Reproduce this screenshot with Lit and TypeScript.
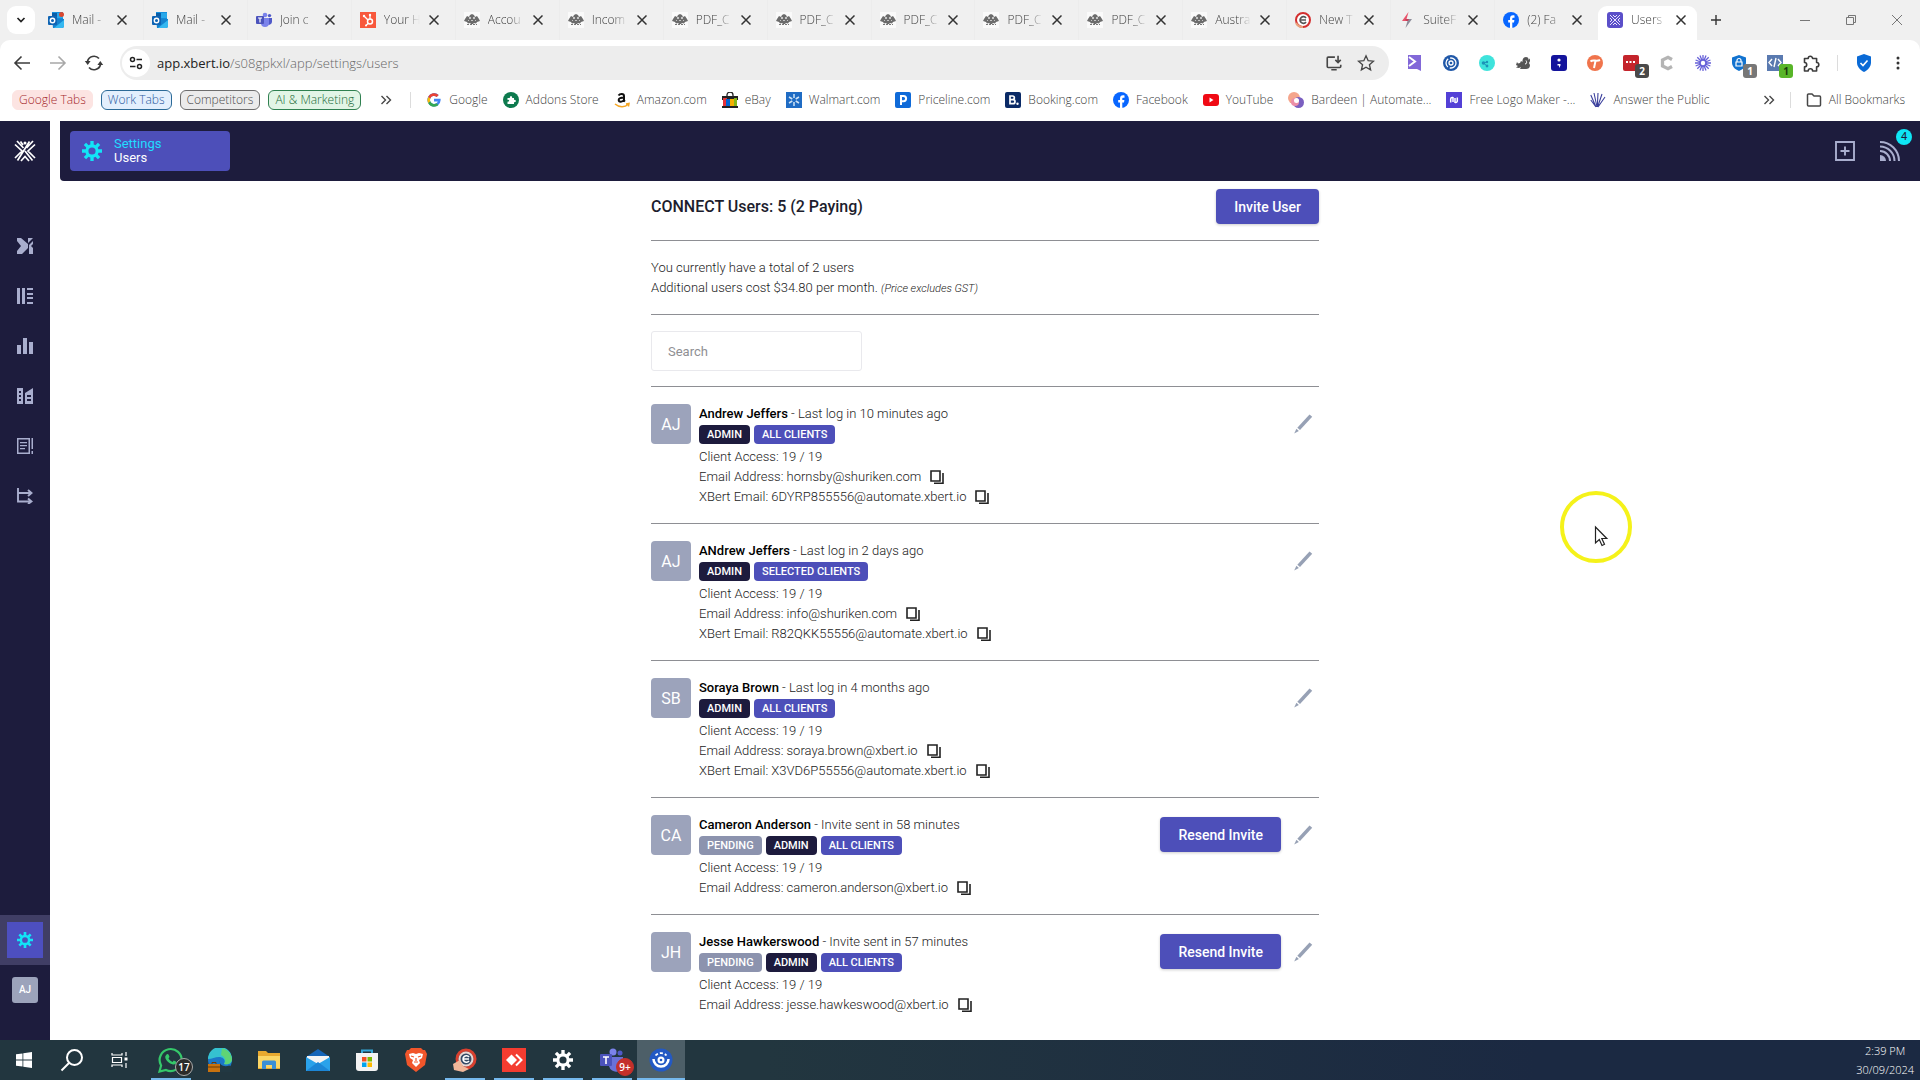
import { LitElement, html, css, nothing, TemplateResult } from "lit";
import { customElement } from "lit/decorators.js";

/* ---------- favicons ---------- */
const crest = html`<svg width="16" height="16" viewBox="0 0 16 16" aria-hidden="true"><rect width="16" height="16" fill="#fafafa"/><path d="M1 7l2-3 2 1 1-2 2-1 2 1 1 2 2-1 2 3 1 2-3 1-1 1.500-2-.5-1 1H7l-1-1-2 .5L3 10 0 9z" fill="#6c6c6c"/><path d="M5 5h2v2H5zM9 5h2v2H9zM7 8h2v1H7zM4 8h1v1H4zM11 8h1v1h-1z" fill="#c4c4c4"/><path d="M3 12.500h10" stroke="#777" stroke-width="1" stroke-dasharray="2 1"/></svg>`;
const outlook = (dot: boolean) => html`<svg width="16" height="16" viewBox="0 0 16 16" aria-hidden="true"><path d="M4 0h11v7H4z" fill="#1490df"/><path d="M4 1h5v5H4z" fill="#0a5ea8"/><path d="M9 1h6v5H9z" fill="#28a8ea"/><path d="M4 6l12 1v7a2 2 0 0 1-2 2H5z" fill="#1583cf"/><path d="M16 8v6a2 2 0 0 1-2 2H6z" fill="#35b8f1"/><rect x="0" y="4" width="9" height="9" rx="1" fill="#0f64b4"/><circle cx="4.500" cy="8.500" r="2.200" fill="none" stroke="#fff" stroke-width="1.400"/><circle cx="13.500" cy="2.500" r=${dot ? 2.5 : 0} fill="#d9472f"/></svg>`;
const teams = html`<svg width="16" height="16" viewBox="0 0 16 16" aria-hidden="true"><circle cx="9" cy="3" r="2.300" fill="#7b83eb"/><circle cx="13.500" cy="3.600" r="1.700" fill="#5059c9"/><path d="M11 6h5v4a3 3 0 0 1-5 2z" fill="#5059c9"/><path d="M5 6h8v5a4 4 0 0 1-8 0z" fill="#7b83eb"/><rect x="0" y="4" width="8" height="8" rx="1" fill="#4b53bc"/><path d="M2 6h4M4 6v4.500" stroke="#fff" stroke-width="1.200"/></svg>`;
const hubspot = html`<svg width="16" height="16" viewBox="0 0 16 16" aria-hidden="true"><rect width="16" height="16" fill="#f8583c"/><circle cx="10" cy="9.500" r="2.500" fill="none" stroke="#fff" stroke-width="1.500"/><path d="M10 7V3M8 8L4 4M8 11.500l-2 2" stroke="#fff" stroke-width="1.300"/><circle cx="4" cy="4" r="1.200" fill="#fff"/><circle cx="10" cy="3" r="1.200" fill="#fff"/><circle cx="6" cy="13.500" r="1" fill="#fff"/></svg>`;
const redE = html`<svg width="16" height="16" viewBox="0 0 16 16" aria-hidden="true"><circle cx="8" cy="8" r="7" fill="#fff" stroke="#d32f2f" stroke-width="2"/><path d="M1 11a7.500 7.500 0 0 0 7 4" stroke="#e9a27c" stroke-width="2" fill="none"/><path d="M11 6a3.300 3.300 0 1 0 0 4M6 8h5" stroke="#555" stroke-width="1.700" fill="none"/></svg>`;
const bolt = html`<svg width="16" height="16" viewBox="0 0 16 16" aria-hidden="true"><path d="M9.500 0L3 9h4z" fill="#e8536a"/><path d="M6.500 16L13 7H9z" fill="#8d8d9a"/><path d="M7 9h2l1-2H6z" fill="#c6415c"/></svg>`;
const facebook = html`<svg width="16" height="16" viewBox="0 0 16 16" aria-hidden="true"><circle cx="8" cy="8" r="8" fill="#0866ff"/><path d="M7 16v-5.500H5.200V8H7V6.600C7 4.500 8 3.300 10 3.300c.7 0 1.300.1 1.500.2v2.200h-1c-1 0-1.200.5-1.200 1.200V8h2.100l-.4 2.500H9.300V16z" fill="#fff"/></svg>`;
const xbertTile = html`<svg width="16" height="16" viewBox="0 0 16 16" aria-hidden="true"><rect width="16" height="16" rx="3" fill="#5b4fc9"/><path d="M3 3l10 10M13 3L3 13M6 3l2 2 2-2M6 13l2-2 2 2M3 6l2 2-2 2M13 6l-2 2 2 2" stroke="#e6e3fb" stroke-width="1" fill="none"/></svg>`;

/* ---------- bookmark icons ---------- */
const google = html`<svg width="16" height="16" viewBox="0 0 48 48" aria-hidden="true"><path d="M43.600 20H24v8.500h11.300C34 33 29.700 36 24 36a12 12 0 1 1 8-21l6-6A20 20 0 1 0 44 24c0-1.300-.1-2.700-.4-4z" fill="#4285f4"/><path d="M6.300 14.700l6.600 4.800A12 12 0 0 1 32 15l6-6A20 20 0 0 0 6.300 14.700z" fill="#ea4335"/><path d="M24 44c5.200 0 9.900-2 13.400-5.200l-6.200-5.200A12 12 0 0 1 12.700 28l-6.500 5A20 20 0 0 0 24 44z" fill="#34a853"/><path d="M6.300 14.700A20 20 0 0 0 6.200 33l6.500-5a12 12 0 0 1 .2-8.500z" fill="#fbbc05"/></svg>`;
const addons = html`<svg width="16" height="16" viewBox="0 0 16 16" aria-hidden="true"><circle cx="8" cy="8" r="8" fill="#0d7a4e"/><path d="M4.500 6H7a1.200 1.200 0 1 1 2 0h2v2a1.200 1.200 0 1 1 0 2v2H4.500V9.500a1 1 0 1 0 0-1.600z" fill="#fff"/></svg>`;
const amazon = html`<svg width="16" height="16" viewBox="0 0 16 16" aria-hidden="true"><path d="M4.500 3.500C6 1.500 10 1.500 10 4v4.500l1 1M10 5.500C7 5.500 4.700 6 4.700 8s3.300 2.500 5.300 0" fill="none" stroke="#111" stroke-width="2"/><path d="M1 12c4 3.500 10 3.500 13 .5M14.500 14.500l.5-3-3 .5" stroke="#f5a623" stroke-width="1.500" fill="none"/></svg>`;
const ebay = html`<svg width="16" height="16" viewBox="0 0 16 16" aria-hidden="true"><path d="M5 5V3a3 3 0 0 1 6 0v2" stroke="#222" stroke-width="1.300" fill="none"/><path d="M0 4h16v4H0z" fill="#222"/><path d="M1 6h4v8H1z" fill="#e53238"/><path d="M4 7h4v7H4z" fill="#0064d2"/><path d="M8 7h4v7H8z" fill="#f5af02"/><path d="M12 6h3v8h-3z" fill="#86b817"/><path d="M0 14h16v2H0z" fill="#222"/></svg>`;
const walmart = html`<svg width="16" height="16" viewBox="0 0 16 16" aria-hidden="true"><rect width="16" height="16" fill="#1f6cc4"/><path d="M8 2v4M8 10v4M3 5l3.300 2M9.700 9L13 11M3 11l3.300-2M9.700 7L13 5" stroke="#cfe3f5" stroke-width="1.500"/></svg>`;
const priceline = html`<svg width="16" height="16" viewBox="0 0 16 16" aria-hidden="true"><rect width="16" height="16" rx="2" fill="#0f6ad8"/><path d="M6 13V4h2.500a2.500 2.500 0 0 1 0 5.200H6" stroke="#fff" stroke-width="2" fill="none"/></svg>`;
const booking = html`<svg width="16" height="16" viewBox="0 0 16 16" aria-hidden="true"><rect width="16" height="16" rx="2" fill="#0a2a66"/><path d="M5 4h2.500a1.800 1.800 0 0 1 0 3.700H5zM5 7.700h3a2 2 0 0 1 0 4H5z" stroke="#fff" stroke-width="1.700" fill="none"/><circle cx="12.500" cy="11.700" r="1.200" fill="#fff"/></svg>`;
const youtube = html`<svg width="16" height="16" viewBox="0 0 16 16" aria-hidden="true"><rect y="2" width="16" height="12" rx="3" fill="#f00a14"/><path d="M6.500 5.500v5l4-2.500z" fill="#fff"/></svg>`;
const bardeen = html`<svg width="16" height="16" viewBox="0 0 16 16" aria-hidden="true"><circle cx="6" cy="6" r="6" fill="#f5a58c"/><circle cx="10.500" cy="10.500" r="5.500" fill="#7a5fc0"/><circle cx="7" cy="10" r="4" fill="#ec8fa8"/><circle cx="8.500" cy="8.500" r="2.500" fill="#fff"/></svg>`;
const logoMaker = html`<svg width="16" height="16" viewBox="0 0 16 16" aria-hidden="true"><rect width="16" height="16" fill="#5340d6"/><path d="M7 5.500H6.200A1.500 1.500 0 0 0 4.700 7v3.500M9 10.500h.8A1.500 1.500 0 0 0 11.300 9V5.500M7 5v5M9 6v5" stroke="#fff" stroke-width="1.500" fill="none"/></svg>`;
const answer = html`<svg width="16" height="16" viewBox="0 0 16 16" aria-hidden="true"><path d="M.8 3l5.200 12M4 1l3 14M8 1L7.300 15M15 5L8 15M12 2L7.600 15M.8 8L6 15" stroke="#3a3f9c" stroke-width="1.100" fill="none"/></svg>`;
const folder = html`<svg width="16" height="16" viewBox="0 0 16 16" aria-hidden="true"><path d="M1.500 13v-10a1 1 0 0 1 1-1H6l2 2h5.500a1 1 0 0 1 1 1v8a1 1 0 0 1-1 1h-11a1 1 0 0 1-1-1z" fill="none" stroke="#474747" stroke-width="1.500"/></svg>`;
const chevrons = html`<svg width="12" height="12" viewBox="0 0 12 12" aria-hidden="true"><path d="M1.500 2l4 4-4 4M6.500 2l4 4-4 4" fill="none" stroke="#474747" stroke-width="1.400"/></svg>`;

/* ---------- browser controls ---------- */
const line = (d: string, color = "#3c3c3c", size = 20, w = "1.6") =>
  html`<svg width=${size} height=${size} viewBox="0 0 20 20" aria-hidden="true"><path d=${d} fill="none" stroke=${color} stroke-width=${w}/></svg>`;
const back = line("M18 10H3M9.500 3.500L3 10l6.500 6.500");
const fwd = line("M2 10h15M10.500 3.500L17 10l-6.500 6.500", "#a8a8a8");
const reload = html`<svg width="20" height="20" viewBox="0 0 20 20" aria-hidden="true"><path d="M5 14.500a6.700 6.700 0 0 0 11.500-3M15 5.500a6.700 6.700 0 0 0-11.500 3" fill="none" stroke="#3c3c3c" stroke-width="1.700"/><path d="M.8 8h5.800L3.700 12zM19.200 12h-5.800L16.300 8z" fill="#3c3c3c"/></svg>`;
const tune = html`<svg width="16" height="16" viewBox="0 0 16 16" aria-hidden="true"><circle cx="4.500" cy="4.500" r="2" fill="none" stroke="#222" stroke-width="1.500"/><path d="M8.500 4.500H14M2 11.500h5.500" stroke="#222" stroke-width="1.600"/><circle cx="11.500" cy="11.500" r="2" fill="none" stroke="#222" stroke-width="1.500"/></svg>`;
const install = line("M11 3.500H3.500a1 1 0 0 0-1 1V14a1 1 0 0 0 1 1h13a1 1 0 0 0 1-1v-2M7 17.500h6M14.500 2v7M11.500 6.500l3 3 3-3", "#474747", 18, "1.8");
const star = line("M10 2l2.400 5.400 5.900.6-4.500 3.900 1.300 5.800-5.100-3-5.100 3 1.300-5.800L1.700 8l5.900-.6z", "#474747", 18, "1.5");
const dots = html`<svg width="16" height="16" viewBox="0 0 16 16" aria-hidden="true"><circle cx="8" cy="3" r="1.500" fill="#333"/><circle cx="8" cy="8" r="1.500" fill="#333"/><circle cx="8" cy="13" r="1.500" fill="#333"/></svg>`;
const cross = html`<svg width="10" height="10" viewBox="0 0 10 10" aria-hidden="true"><path d="M.5.500l9 9M9.500.500l-9 9" stroke="#333" stroke-width="1.500"/></svg>`;

const extensions: [string, TemplateResult, string?, string?][] = [
  ["Arrow pad", html`<svg width="16" height="16" viewBox="0 0 16 16"><path d="M1 0h13v16l-4-2H1z" fill="#8268d8"/><path d="M2 2l6 4.500L2 11" stroke="#fff" stroke-width="2" fill="none"/></svg>`],
  ["Recorder", html`<svg width="16" height="16" viewBox="0 0 16 16"><circle cx="8" cy="8" r="8" fill="#2058a8"/><circle cx="8" cy="8" r="5" fill="none" stroke="#fff" stroke-width="1.300" stroke-dasharray="9 2"/><circle cx="8" cy="8" r="2" fill="none" stroke="#fff" stroke-width="1.300"/></svg>`],
  ["Sharing", html`<svg width="16" height="16" viewBox="0 0 16 16"><circle cx="8" cy="8" r="8" fill="#3fe3dc"/><circle cx="4.500" cy="8" r="1.800" fill="#1d93b8"/><circle cx="8" cy="7" r="1.200" fill="#1d93b8"/><circle cx="8" cy="11" r="1.400" fill="#1d93b8"/><path d="M4.500 8L8 11M4.500 8L8 7" stroke="#1d93b8"/></svg>`],
  ["Squirrel", html`<svg width="16" height="16" viewBox="0 0 16 16"><path d="M1 10l1-3 1 1.500 2-.5 1-2 1.500 1C7 4 9 2 11 2s3 1.500 2 3l1.500-1.500C15.500 5 15 7 14 8l1 2c0 3-2 4-4 4H5l1-2-2 1-3-.5 2-1.500z" fill="#555"/><path d="M10 9c2 0 2-2 1-3.500" stroke="#fff" fill="none"/></svg>`],
  ["Notes", html`<svg width="16" height="16" viewBox="0 0 16 16"><rect width="16" height="16" rx="3" fill="#14149c"/><circle cx="8" cy="5" r="1.600" fill="#fff"/><path d="M6.500 9h3v1.500L8 13V10.500H6.500z" fill="#fff"/></svg>`],
  ["Tango", html`<svg width="16" height="16" viewBox="0 0 16 16"><circle cx="8" cy="8" r="8" fill="#f0744c"/><path d="M3.500 6.500C6 4 9 7 13 5M8.500 6L7 13" stroke="#fff" stroke-width="2" fill="none"/></svg>`],
  ["Passwords", html`<svg width="16" height="16" viewBox="0 0 16 16"><rect width="16" height="16" rx="2" fill="#c4242b"/><path d="M3 7h2M6.500 7h2M10 7h2" stroke="#fff" stroke-width="2"/></svg>`, "2", "dark"],
  ["Clipper", html`<svg width="16" height="16" viewBox="0 0 16 16"><path d="M13 4.500L9 2.300 3.500 5v6L9 13.700l4-2.200" stroke="#b4b4b4" stroke-width="3.300" fill="none"/></svg>`],
  ["Loom", html`<svg width="16" height="16" viewBox="0 0 16 16"><path d="M8 0v16M0 8h16M2.300 2.300l11.400 11.400M13.700 2.300L2.300 13.700M5 .6l6 14.800M11 .6L5 15.400M.6 5l14.800 6M.6 11l14.800-6" stroke="#6660d8" stroke-width="1.300"/><circle cx="8" cy="8" r="3.700" fill="#6660d8"/><circle cx="8" cy="8" r="2.200" fill="#fff"/></svg>`],
  ["Privacy shield", html`<svg width="16" height="16" viewBox="0 0 16 16"><path d="M8 0l7 2.500v5c0 4-3 7-7 8.500-4-1.500-7-4.500-7-8.500v-5z" fill="#1273d0"/><path d="M5 7h6v4H5zM6 7V5.500a2 2 0 0 1 4 0V7" stroke="#fff" fill="none" stroke-width="1.200"/></svg>`, "1", "neutral"],
  ["Tag inspector", html`<svg width="16" height="16" viewBox="0 0 16 16"><rect width="16" height="16" fill="#5a7ab0"/><path d="M5 4L2 7.500 5 11M9 3l-2 9M11 4l3 3.500-3 3.500" stroke="#fff" stroke-width="1.400" fill="none"/></svg>`, "1", "fresh"],
  ["Extensions", html`<svg width="20" height="20" viewBox="0 0 20 20"><path d="M3.500 5.500h3.700a2.200 2.200 0 1 1 4.400 0h4v4a2.200 2.200 0 1 1 0 4.400V18h-4a2.200 2.200 0 0 0-4.400 0H3.500v-4.100a2.200 2.200 0 0 0 0-4.400z" fill="none" stroke="#3c3c3c" stroke-width="1.600" stroke-linejoin="round"/></svg>`],
];

/* ---------- app icons ---------- */
const gear = (size: number, color: string) => html`<svg width=${size} height=${size} viewBox="0 0 24 24" aria-hidden="true"><path d="M12 0v24M0 12h24M3.500 3.500l17 17M20.500 3.500l-17 17" stroke=${color} stroke-width="4"/><circle cx="12" cy="12" r="8" fill=${color}/><circle cx="12" cy="12" r="4.300" class="hole"/></svg>`;
const logo = html`<svg width="22" height="22" viewBox="0 0 22 22" aria-hidden="true"><path d="M3 1l6.500 7M19 1l-6.500 7M1 4.500L8 11l-7 7M21 4.500L14 11l7 7M15.500 1.500L3.500 20.500M6.500 1.500l2.500 3.500M11 11l7.500 9.500M7 21l4-4.500 4 4.500" fill="none" stroke="#fff" stroke-width="1.700"/><circle cx="11" cy="3" r="1.500" fill="#fff"/></svg>`;
const nav: [string, TemplateResult][] = [
  ["XBert", html`<svg width="16" height="16" viewBox="0 0 16 16"><path d="M0 0h4l7 6v4l-6 6H0v-3l4-5-4-5z"/><path d="M11 0h5l-5 5zM12 7l4-4v3l-2 2 2 2v6h-4z"/></svg>`],
  ["Lists", html`<svg width="16" height="16" viewBox="0 0 16 16"><path d="M0 0h3v16H0zM5 0h3v16H5zM10 0h6v2h-6zM10 5h6v2h-6zM10 9h6v2h-6zM10 14h6v2h-6z"/></svg>`],
  ["Reports", html`<svg width="16" height="16" viewBox="0 0 16 16"><path d="M0 7h4v9H0zM6 0h4v16H6zM12 4h4v12h-4z"/></svg>`],
  ["Clients", html`<svg width="16" height="16" viewBox="0 0 16 16"><path fill-rule="evenodd" d="M0 0h6v16H0zM2 3v2h2V3zM2 7v2h2V7zM2 11v2h2v-2zM8 5l8-5v16H8zM10 7v2h4V7zM10 11v2h4v-2z"/></svg>`],
  ["Tasks", html`<svg width="16" height="16" viewBox="0 0 16 16"><path fill-rule="evenodd" d="M0 0h13v16H0zM1.500 1.500v13h10v-13z"/><path d="M3 4h7v1.300H3zM3 7h7v1.300H3zM3 10h5v1.300H3zM14.500 0H16v11h-1.500zM14.500 13H16v3h-1.500z"/></svg>`],
  ["Workflows", html`<svg width="16" height="16" viewBox="0 0 16 16"><path d="M1 0v13.500h13M1 5h13M11 2l3.500 3L11 8M11 10.500l3.500 3-3.500 2.500" fill="none" stroke="#a9aece" stroke-width="1.900"/></svg>`],
];
const copyIcon = html`<svg width="14" height="14" viewBox="0 0 14 14" aria-hidden="true"><path d="M1 1h9v10H1z" fill="none" stroke="#222" stroke-width="1.600"/><path d="M13 3v10.300H4" fill="none" stroke="#222" stroke-width="1.600"/></svg>`;
const pencil = html`<svg width="20" height="20" viewBox="0 0 20 20" aria-hidden="true"><path d="M4.300 13.700L16.500.500l2.700 2.300L7 16z" fill="#97a1b5"/><path d="M3.400 14.800l2.500 2.300-4.700 2.400z" fill="#97a1b5"/></svg>`;

/* ---------- taskbar icons ---------- */
const tbWin = html`<svg width="16" height="16" viewBox="0 0 16 16"><path d="M0 2.300L6.500 1.400v6.200H0zM7.300 1.300L16 0v7.600H7.300zM0 8.400h6.500v6.200L0 13.700zM7.300 8.400H16V16l-8.700-1.300z" fill="#fff"/></svg>`;
const tbSearch = html`<svg width="24" height="24" viewBox="0 0 24 24"><circle cx="14.500" cy="9.500" r="7.500" fill="none" stroke="#fff" stroke-width="2"/><path d="M9 15l-7.500 7.500" stroke="#fff" stroke-width="2"/></svg>`;
const tbView = html`<svg width="18" height="18" viewBox="0 0 18 18"><path d="M1 2v2h10V2M1 16v-2h10v2M1.500 6.500h9v5h-9zM15 1v4M15 12v5" fill="none" stroke="#fff" stroke-width="1.200"/><path d="M13.500 6.500h3v3h-3z" fill="#fff"/></svg>`;
const tbWhats = html`<svg width="26" height="26" viewBox="0 0 26 26"><path d="M1.500 24.500l1.600-6A11 11 0 1 1 8 23z" fill="none" stroke="#35c86a" stroke-width="2.200"/><path d="M8.500 7.500c1-1 2-.5 2.500 1l.5 1.500-1 1.200c.8 1.800 2.300 3 4 3.800l1.300-1.400 2.500 1.200c.3 2.300-2 3.200-4 2.500-4-1-7.500-5-7-8z" fill="#35c86a"/></svg>`;
const tbEdge = html`<svg width="24" height="24" viewBox="0 0 24 24"><circle cx="12" cy="12" r="12" fill="#1b77c8"/><path d="M0 11A12 12 0 0 1 24 11c0 5-4 6-8 5 2-3 0-7-5-7-4 0-7 2-11 2z" fill="#35c1d0"/><path d="M14 .2A12 12 0 0 1 24 11c0 4-4 6-8 5 2-2 2-7-3-9z" fill="#5fd475"/><path d="M12 13c-1 4 4 6.500 9.500 4.500L24 20v4H12z" fill="#223842"/><rect x="0" y="16" width="12" height="8" fill="#c8720f"/><path d="M4 16v-1.500h4V16M0 19h12" stroke="#6d3b05" fill="none"/></svg>`;
const tbFiles = html`<svg width="22" height="20" viewBox="0 0 22 20"><path d="M0 1h8l2 2h12v16H0z" fill="#e8a92f"/><path d="M0 6h22v12H0z" fill="#fbd665"/><path d="M4 19v-7a1.500 1.500 0 0 1 1.500-1.500h11A1.500 1.500 0 0 1 18 12v7h-4v-4H8v4z" fill="#3a8fd6"/></svg>`;
const tbMail = html`<svg width="24" height="24" viewBox="0 0 24 24"><path d="M0 9l12-8 12 8v5H0z" fill="#1565b8"/><path d="M1 8h22v8H1z" fill="#f4f4f4"/><path d="M0 9l12 7 12-7v14H0z" fill="#2aa2ea"/><path d="M0 23l12-9 12 9z" fill="#1c86d6"/></svg>`;
const tbStore = html`<svg width="24" height="24" viewBox="0 0 24 24"><path d="M7 6V2.500h10V6" fill="none" stroke="#35a7d8" stroke-width="2"/><path d="M1 5h22v15a3 3 0 0 1-3 3H4a3 3 0 0 1-3-3z" fill="#f3f3f3"/><path d="M7 9h4.500v4.500H7z" fill="#f25022"/><path d="M12.500 9H17v4.500h-4.500z" fill="#7fba00"/><path d="M7 14.500h4.500V19H7z" fill="#00a4ef"/><path d="M12.500 14.500H17V19h-4.500z" fill="#ffb900"/></svg>`;
const tbBrave = html`<svg width="22" height="24" viewBox="0 0 22 24"><path d="M6 0h10l2 2h2l2 4-2 11-9 7-9-7L0 6l2-4h2z" fill="#f1562b"/><path d="M4 6l4-1 3 1 3-1 4 1-1 4-3 2 1 3-4 4-4-4 1-3-3-2z" fill="#fff"/><path d="M6 8l3 1M16 8l-3 1M9 14h4M11 10v3" stroke="#f1562b" stroke-width="1.200"/></svg>`;
const tbRec = html`<svg width="24" height="24" viewBox="0 0 24 24"><circle cx="13" cy="11" r="9" fill="#344a66" stroke="#d8402f" stroke-width="3"/><circle cx="13" cy="11" r="6.500" fill="none" stroke="#e9d9d4" stroke-width="2"/><path d="M16 9a3.300 3.300 0 1 0 0 4M10 11h6" stroke="#fff" stroke-width="1.600" fill="none"/><path d="M0 16l7-4 3 6 6 3-6 3-9-2z" fill="#f0b79a"/></svg>`;
const tbAny = html`<svg width="24" height="24" viewBox="0 0 24 24"><rect width="24" height="24" fill="#f43c30"/><path d="M9.500 6.500L15 12l-5.500 5.500L4 12z" fill="#fff"/><path d="M14 6.500l5.500 5.500-5.500 5.500" fill="none" stroke="#fff" stroke-width="2"/></svg>`;
const tbTeams = html`<svg width="24" height="24" viewBox="0 0 24 24"><circle cx="13" cy="4" r="3.500" fill="#7b83eb"/><circle cx="20" cy="5" r="2.500" fill="#5059c9"/><path d="M8 9h15v6a6 6 0 0 1-14 3z" fill="#6a71d8"/><rect y="6" width="12" height="12" rx="1" fill="#4b53bc"/><path d="M3 9h6M6 9v7" stroke="#fff" stroke-width="1.600"/></svg>`;
const tbCam = html`<svg width="24" height="24" viewBox="0 0 24 24"><circle cx="12" cy="12" r="11.500" fill="#2359c4"/><path d="M4.500 11a7.500 7.500 0 0 0 15 0" fill="none" stroke="#fff" stroke-width="2.500"/><path d="M6.500 7.500A7.500 7.500 0 0 1 17.500 7.500" fill="none" stroke="#fff" stroke-width="1.800" stroke-dasharray="3 2"/><circle cx="12" cy="12" r="3.500" fill="#fff"/><circle cx="12" cy="12" r="1.300" fill="#2359c4"/></svg>`;

interface Tab { icon: TemplateResult; title: string; active?: boolean }
const pdf: Tab = { icon: crest, title: "PDF_C" };
const tabs: Tab[] = [
  { icon: outlook(true), title: "Mail -" }, { icon: outlook(false), title: "Mail -" },
  { icon: teams, title: "Join c" }, { icon: hubspot, title: "Your H" },
  { icon: crest, title: "Accou" }, { icon: crest, title: "Incom" },
  pdf, pdf, pdf, pdf, pdf,
  { icon: crest, title: "Austra" }, { icon: redE, title: "New T" },
  { icon: bolt, title: "SuiteF" }, { icon: facebook, title: "(2) Fa" },
  { icon: xbertTile, title: "Users", active: true },
];
const groups = [["Google Tabs", "red"], ["Work Tabs", "blue"], ["Competitors", "grey"], ["AI & Marketing", "green"]];
const bookmarks: [TemplateResult, string][] = [
  [google, "Google"], [addons, "Addons Store"], [amazon, "Amazon.com"], [ebay, "eBay"], [walmart, "Walmart.com"],
  [priceline, "Priceline.com"], [booking, "Booking.com"], [facebook, "Facebook"], [youtube, "YouTube"],
  [bardeen, "Bardeen | Automate..."], [logoMaker, "Free Logo Maker -..."], [answer, "Answer the Public"],
];

interface User { initials: string; name: string; status: string; pending?: boolean; scope: string; email: string; xbert?: string }
const users: User[] = [
  { initials: "AJ", name: "Andrew Jeffers", status: "Last log in 10 minutes ago", scope: "ALL CLIENTS", email: "hornsby@shuriken.com", xbert: "6DYRP855556@automate.xbert.io" },
  { initials: "AJ", name: "ANdrew Jeffers", status: "Last log in 2 days ago", scope: "SELECTED CLIENTS", email: "info@shuriken.com", xbert: "R82QKK55556@automate.xbert.io" },
  { initials: "SB", name: "Soraya Brown", status: "Last log in 4 months ago", scope: "ALL CLIENTS", email: "soraya.brown@xbert.io", xbert: "X3VD6P55556@automate.xbert.io" },
  { initials: "CA", name: "Cameron Anderson", status: "Invite sent in 58 minutes", pending: true, scope: "ALL CLIENTS", email: "cameron.anderson@xbert.io" },
  { initials: "JH", name: "Jesse Hawkerswood", status: "Invite sent in 57 minutes", pending: true, scope: "ALL CLIENTS", email: "jesse.hawkeswood@xbert.io" },
];

const reset = css`
  *, *::before { box-sizing: border-box; }
  button { font: inherit; color: inherit; background: none; border: 0; padding: 0; margin: 0; display: inline-flex; align-items: center; justify-content: center; cursor: pointer; }
  a { color: inherit; text-decoration: none; }
  svg { display: block; flex: none; }
`;

@customElement("browser-chrome")
class BrowserChrome extends LitElement {
  static styles = [reset, css`
    :host { display: block; background: #f0f0f0; color: #3f3f3f; font-family: "Open Sans", "Segoe UI", sans-serif; font-size: 12px; }
    .strip { display: flex; align-items: stretch; height: 40px; padding-left: 7px; }
    .search { align-self: center; width: 28px; height: 28px; background: #fff; border-radius: 9px; margin-right: 4px; }
    .tabs { flex: 1; display: flex; min-width: 0; }
    .tab { flex: 1 1 0; min-width: 0; display: flex; align-items: center; gap: 8px; padding: 0 11px 0 9px; }
    .tab + .tab:not(.active) { box-shadow: inset 1px 0 #ececec; }
    .tab.active { background: #fff; border-radius: 9px 9px 0 0; margin: 6px 5px 0 0; padding: 0 6px 6px 9px; }
    .title { flex: 1; overflow: hidden; white-space: nowrap; line-height: 16px; margin-right: -8px; mask-image: linear-gradient(to right, #000 55%, transparent 90%); }
    .close { width: 20px; height: 20px; }
    .wins { display: flex; width: 218px; align-items: center; }
    .plus { width: 28px; height: 28px; margin-right: auto; }
    .win { width: 46px; height: 40px; }
    .bar { display: flex; align-items: center; gap: 8px; height: 40px; padding: 6px 6px 0 4px; background: #fff; border-radius: 10px 10px 0 0; }
    .set { display: flex; align-items: center; }
    .tool { position: relative; width: 36px; height: 34px; }
    .small { width: 32px; }
    .url { flex: 1; display: flex; align-items: center; height: 34px; padding: 0 7px 0 2px; background: #ededed; border-radius: 17px; }
    .info { width: 28px; height: 28px; border-radius: 50%; background: #fff; margin-right: 7px; }
    .address { flex: 1; font-size: 13px; color: #666; }
    .address b { font-weight: 400; color: #222; }
    .count { position: absolute; right: 0; bottom: 2px; min-width: 14px; height: 14px; border-radius: 3px; color: #fff; font-size: 10px; font-weight: 700; line-height: 14px; }
    .dark { background: #4a4a4a; }
    .neutral { background: #777; }
    .fresh { background: #58b528; color: #183a0b; }
    .rule { width: 1px; height: 16px; background: #dcdcdc; }
    .marks { display: flex; align-items: center; gap: 15px; height: 41px; padding: 0 15px 2px 12px; background: #fff; }
    .groups { display: flex; gap: 8px; }
    .chip { height: 20px; padding: 0 6px; border: 1px solid; border-radius: 6px; white-space: nowrap; }
    .more { margin: 0 3px 0 4px; }
    .red { color: #a5282c; background: #fce4e2; border-color: #fce4e2; }
    .blue { color: #2b5aa0; background: #e3effd; border-color: #2b6a98; }
    .grey { color: #4d4d4d; background: #ebebeb; border-color: #6d6d6d; }
    .green { color: #1c6b38; background: #e2f5e6; border-color: #2f8050; }
    .mark { display: flex; align-items: center; gap: 7px; white-space: nowrap; line-height: 16px; }
    .end { margin-left: auto; display: flex; align-items: center; gap: 15px; }
  `];
  render() {
    return html`
      <div class="strip">
        <button class="search" aria-label="Search tabs"><svg width="10" height="10" viewBox="0 0 10 10"><path d="M1.500 3L5 6.500 8.500 3" fill="none" stroke="#222" stroke-width="1.700"/></svg></button>
        <div class="tabs">${tabs.map((t) => html`<div class="tab ${t.active ? "active" : ""}">${t.icon}<span class="title">${t.title}</span><button class="close" aria-label="Close tab">${cross}</button></div>`)}</div>
        <div class="wins">
          <button class="plus" aria-label="New tab"><svg width="12" height="12" viewBox="0 0 12 12"><path d="M6 1v10M1 6h10" stroke="#333" stroke-width="1.400"/></svg></button>
          <button class="win" aria-label="Minimize"><svg width="10" height="10" viewBox="0 0 10 10"><path d="M0 5.500h10" stroke="#777"/></svg></button>
          <button class="win" aria-label="Restore"><svg width="10" height="10" viewBox="0 0 10 10"><path d="M.5 2.500h7v7h-7zM2.500 2.500v-2h7v7h-2" fill="none" stroke="#777"/></svg></button>
          <button class="win" aria-label="Close"><svg width="10" height="10" viewBox="0 0 10 10"><path d="M0 0l10 10M10 0L0 10" stroke="#777"/></svg></button>
        </div>
      </div>
      <div class="bar">
        <div class="set"><button class="tool" aria-label="Back">${back}</button><button class="tool" aria-label="Forward">${fwd}</button><button class="tool" aria-label="Reload">${reload}</button></div>
        <div class="url">
          <button class="info" aria-label="Site information">${tune}</button>
          <span class="address"><b>app.xbert.io</b>/s08gpkxl/app/settings/users</span>
          <button class="tool small" aria-label="Install app">${install}</button><button class="tool small" aria-label="Bookmark page">${star}</button>
        </div>
        <div class="set">${extensions.map(([name, icon, count, tone]) => html`<button class="tool" aria-label=${name}>${icon}${count ? html`<span class="count ${tone}">${count}</span>` : nothing}</button>`)}</div>
        <span class="rule"></span>
        <div class="set"><button class="tool" aria-label="Profile"><svg width="18" height="18" viewBox="0 0 18 18"><path d="M9 0l7 2.500v6c0 4-3 7.500-7 9.500-4-2-7-5.500-7-9.500v-6z" fill="#0a6ad6"/><path d="M5.500 9l2.500 2.500 4.500-5" fill="none" stroke="#fff" stroke-width="1.600"/></svg></button><button class="tool small" aria-label="Menu">${dots}</button></div>
      </div>
      <div class="marks">
        <div class="groups">${groups.map(([g, c]) => html`<button class="chip ${c}">${g}</button>`)}</div>
        <button class="more" aria-label="More groups">${chevrons}</button><span class="rule"></span>
        ${bookmarks.map(([i, t]) => html`<a class="mark" href="#">${i}<span>${t}</span></a>`)}
        <div class="end"><button aria-label="More bookmarks">${chevrons}</button><span class="rule"></span><a class="mark" href="#">${folder}<span>All Bookmarks</span></a></div>
      </div>`;
  }
}

@customElement("user-row")
class UserRow extends LitElement {
  static properties = { user: { attribute: false } };
  declare user: User;
  static styles = [reset, css`
    :host { display: flex; align-items: flex-start; gap: 8px; padding: 17px 0 16px; border-top: 1px solid #8e8f94; }
    .avatar { flex: none; width: 40px; height: 40px; display: grid; place-items: center; border-radius: 4px; background: #9ca3bb; color: #fff; font-size: 16px; font-weight: 400; }
    .body { flex: 1; line-height: 20px; }
    .name { font-weight: 500; color: #000; }
    .badges { display: flex; gap: 4px; margin: 1px 0 3px; }
    .badge { height: 19px; padding: 0 8px; border-radius: 4px; color: #fff; font-size: 11px; font-weight: 500; line-height: 19px; background: #4d4fb9; }
    .admin { background: #1d1b3d; }
    .pending { background: #8c93ae; }
    .line { display: flex; align-items: center; gap: 9px; }
    .actions { display: flex; align-items: center; gap: 6px; height: 39px; }
    .edit { width: 32px; height: 32px; }
    .resend { height: 35px; padding: 0 18px; border-radius: 4px; background: #4d4fb9; color: #fff; font-size: 14px; font-weight: 500; box-shadow: 0 1px 3px #0003; }
  `];
  render() {
    const u = this.user;
    return html`
      <div class="avatar">${u.initials}</div>
      <div class="body">
        <div><span class="name">${u.name}</span> - ${u.status}</div>
        <div class="badges">${u.pending ? html`<span class="badge pending">PENDING</span>` : nothing}<span class="badge admin">ADMIN</span><span class="badge">${u.scope}</span></div>
        <div>Client Access: 19 / 19</div>
        <div class="line">Email Address: ${u.email}<button aria-label="Copy email address">${copyIcon}</button></div>
        ${u.xbert ? html`<div class="line">XBert Email: ${u.xbert}<button aria-label="Copy XBert email">${copyIcon}</button></div>` : nothing}
      </div>
      <div class="actions">${u.pending ? html`<button class="resend">Resend Invite</button>` : nothing}<button class="edit" aria-label="Edit user">${pencil}</button></div>`;
  }
}

@customElement("task-bar")
class TaskBar extends LitElement {
  static styles = [reset, css`
    :host { display: flex; align-items: stretch; height: 40px; padding-right: 6px; background: linear-gradient(90deg, #22363f 0%, #22363f 40%, #1b2942 80%); color: #fff; font-family: "Open Sans", "Segoe UI", sans-serif; font-size: 11px; }
    .system, .apps { display: flex; }
    .apps { gap: 1px; margin-left: 3px; flex: 1; }
    .item { position: relative; width: 48px; }
    .running { background: linear-gradient(#76b9ed, #76b9ed) center bottom / 40px 2px no-repeat; }
    .current { background: linear-gradient(#76b9ed, #76b9ed) center bottom / 48px 2px no-repeat, #4d5f68; }
    .count { position: absolute; right: 2px; bottom: 4px; min-width: 18px; height: 18px; border-radius: 9px; border: 1px solid #aaa; background: #2b2b2b; font-size: 10px; font-weight: 600; line-height: 16px; }
    .alert { background: #c4302b; border-color: #c4302b; }
    .clock { display: flex; flex-direction: column; justify-content: center; align-items: center; line-height: 19px; }
    .hole { fill: #22363f; }
  `];
  render() {
    const apps: [string, TemplateResult, string, string?][] = [
      ["WhatsApp", tbWhats, "running", "17"], ["Edge", tbEdge, ""], ["File Explorer", tbFiles, ""], ["Mail", tbMail, ""], ["Store", tbStore, ""], ["Brave", tbBrave, ""],
      ["Recorder", tbRec, "running"], ["AnyDesk", tbAny, "running"], ["Settings", gear(20, "#fff"), "running"], ["Teams", tbTeams, "running", "9+"], ["Screen capture", tbCam, "current"],
    ];
    return html`
      <div class="system"><button class="item" aria-label="Start">${tbWin}</button><button class="item" aria-label="Search">${tbSearch}</button><button class="item" aria-label="Task view">${tbView}</button></div>
      <div class="apps">${apps.map(([n, i, c, b]) => html`<button class="item ${c}" aria-label=${n}>${i}${b ? html`<span class="count ${b === "9+" ? "alert" : ""}">${b}</span>` : nothing}</button>`)}</div>
      <div class="clock"><span>2:39 PM</span><span>30/09/2024</span></div>`;
  }
}

@customElement("app-root")
class AppRoot extends LitElement {
  static styles = [reset, css`
    :host { display: flex; flex-direction: column; min-height: 100vh; position: relative; background: #fff; color: #222; font-family: Roboto, sans-serif; font-size: 13px; font-weight: 300; }
    .shell { flex: 1; display: flex; }
    .side { width: 50px; display: flex; flex-direction: column; background: #1d1c3d; }
    .brand { height: 60px; margin-bottom: 40px; }
    .nav { height: 50px; }
    .nav svg { fill: #a9aece; }
    .bottom { margin-top: auto; margin-bottom: 25px; display: flex; flex-direction: column; }
    .current { height: 50px; background: #403e65; }
    .tile { width: 36px; height: 36px; display: grid; place-items: center; background: #4d4fc0; }
    .hole { fill: #4d4fb9; }
    .me { height: 50px; }
    .face { width: 26px; height: 26px; border-radius: 3px; background: #9ca3bb; color: #fff; font-size: 10px; font-weight: 500; line-height: 26px; }
    .main { flex: 1; min-width: 0; }
    .head { display: flex; align-items: center; height: 60px; margin-left: 10px; padding: 0 20px 0 10px; background: #1d1c3d; border-radius: 0 0 0 4px; gap: 25px; }
    .crumb { width: 160px; height: 40px; padding-left: 12px; gap: 12px; justify-content: flex-start; text-align: left; border-radius: 4px; background: #4d4fb9; color: #fff; font-weight: 400; line-height: 14px; margin-right: auto; }
    .crumb strong { display: block; font-weight: 400; color: #22dcff; }
    .feed { position: relative; }
    .badge { position: absolute; left: 16px; top: -12px; width: 16px; height: 16px; border-radius: 50%; background: #0fe6f5; color: #1d1c3d; font-size: 11px; font-weight: 400; line-height: 16px; }
    .content { max-width: 668px; margin: 0 auto; }
    .top { display: flex; justify-content: space-between; align-items: center; padding: 8px 0 16px; }
    h1 { margin: 0; font-size: 16px; font-weight: 500; color: #1d1d2d; }
    .invite { height: 35px; padding: 0 18px; border-radius: 4px; background: #4d4fb9; color: #fff; font-size: 14px; font-weight: 500; box-shadow: 0 1px 3px #0003; }
    .info, .find { border-top: 1px solid #8e8f94; }
    .info { padding: 17px 0 15px; line-height: 20px; }
    .info p { margin: 0; }
    .info em { font-size: 11px; }
    .find { padding: 16px 0 15px; }
    .find input { display: block; width: 211px; height: 40px; padding: 0 16px; border: 1px solid #e9e9ed; border-radius: 3px; font: 400 13px Roboto, sans-serif; color: #222; background: #fff; }
    .find input::placeholder { color: #8f8f93; }
    .cursor { position: absolute; left: 1559px; top: 490px; pointer-events: none; }
  `];
  render() {
    return html`
      <browser-chrome></browser-chrome>
      <div class="shell">
        <nav class="side">
          <button class="brand" aria-label="Home">${logo}</button>
          ${nav.map(([n, i]) => html`<button class="nav" aria-label=${n}>${i}</button>`)}
          <div class="bottom">
            <button class="current" aria-label="Settings"><span class="tile">${gear(16, "#12e4f7")}</span></button>
            <button class="me" aria-label="Account"><span class="face">AJ</span></button>
          </div>
        </nav>
        <main class="main">
          <header class="head">
            <button class="crumb">${gear(20, "#12e4f7")}<span><strong>Settings</strong>Users</span></button>
            <button aria-label="Add"><svg width="20" height="20" viewBox="0 0 20 20"><path d="M1 1h18v18H1zM10 5.500v9M5.500 10h9" fill="none" stroke="#a9aece" stroke-width="1.900"/></svg></button>
            <button class="feed" aria-label="Notifications"><svg width="20" height="20" viewBox="0 0 20 20"><path d="M0 1a19 19 0 0 1 19 19M0 5.500A14.500 14.500 0 0 1 14.500 20M0 10a10 10 0 0 1 10 10" fill="none" stroke="#a9aece" stroke-width="2"/><path d="M0 14a6 6 0 0 1 6 6H0z" fill="#a9aece"/></svg><span class="badge">4</span></button>
          </header>
          <div class="content">
            <div class="top"><h1>CONNECT Users: 5 (2 Paying)</h1><button class="invite">Invite User</button></div>
            <div class="info"><p>You currently have a total of 2 users</p><p>Additional users cost $34.80 per month. <em>(Price excludes GST)</em></p></div>
            <div class="find"><input type="search" placeholder="Search" aria-label="Search users"></div>
            ${users.map((u) => html`<user-row .user=${u}></user-row>`)}
          </div>
        </main>
      </div>
      <task-bar></task-bar>
      <svg class="cursor" width="74" height="74" viewBox="0 0 74 74" aria-hidden="true"><circle cx="37" cy="37" r="34" fill="none" stroke="#f5f21a" stroke-width="4"/><path d="M36.500 37v16l3.800-3.500 2.700 6 2.500-1.200-2.700-5.800h5z" fill="#fff" stroke="#222" stroke-width="1.200"/></svg>`;
  }
}
